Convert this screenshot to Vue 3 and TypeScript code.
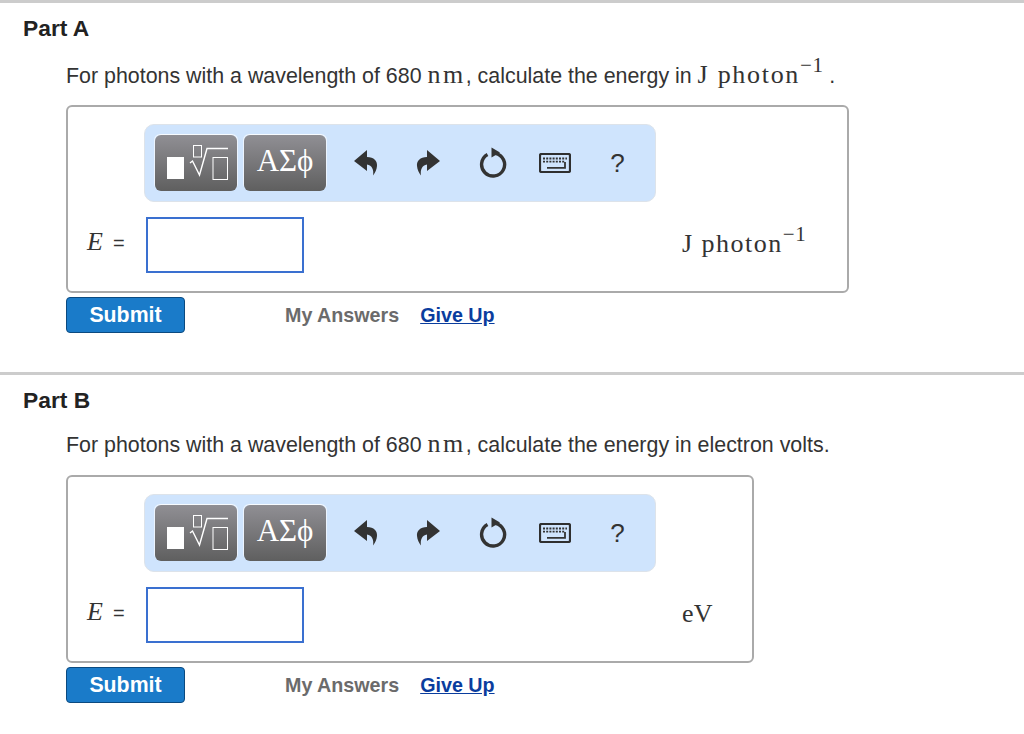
<script setup lang="ts">
interface Part {
  key: string
  title: string
  unit: string
  sup: boolean
}
const parts: Part[] = [
  { key: 'a', title: 'Part A', unit: 'J photon', sup: true },
  { key: 'b', title: 'Part B', unit: 'eV', sup: false },
]
</script>

<template>
  <main class="page">
    <section v-for="p in parts" :key="p.key" class="part" :class="'part-' + p.key">
      <h2 class="title">{{ p.title }}</h2>
      <p class="prompt">
        <span>For photons with a wavelength of 680 </span><span class="math">nm</span><span>, calculate the energy in </span>
        <template v-if="p.sup">
          <span class="math big">J photon<sup>&minus;1</sup></span><span> .</span>
        </template>
        <template v-else><span>electron volts.</span></template>
      </p>
      <div class="box">
        <div class="toolbar">
          <button class="tplbtn" type="button" aria-label="Templates">
            <svg width="82" height="56" viewBox="0 0 82 56">
              <rect x="12" y="22" width="17" height="22" fill="#fff" />
              <rect x="38.5" y="10.5" width="8" height="11.5" fill="none" stroke="#fff" />
              <path d="M35 28L37.5 26L44.5 40L52 13.5H73" fill="none" stroke="#fff" stroke-width="1.4" />
              <rect x="58" y="22.5" width="14.5" height="22" fill="none" stroke="#fff" />
            </svg>
          </button>
          <button class="tplbtn greek" type="button">ΑΣϕ</button>
          <div class="tools">
            <span class="tool">
              <svg width="25" height="26" viewBox="0 0 25 26">
                <path d="M1 11L14 0V7C21 7 24.5 11 24 16C23.7 20 22 23 20 25.5C21 20 19 15 14 14.5V21Z" fill="#333" />
              </svg>
            </span>
            <span class="tool">
              <svg width="25" height="26" viewBox="0 0 25 26">
                <path d="M24 11L11 0V7C4 7 0.5 11 1 16C1.3 20 3 23 5 25.5C4 20 6 15 11 14.5V21Z" fill="#333" />
              </svg>
            </span>
            <span class="tool">
              <svg width="30" height="32" viewBox="0 0 30 32">
                <path d="M18.5 6.3A11.5 11.5 0 1 1 10.5 7.5" fill="none" stroke="#333" stroke-width="3.4" />
                <path d="M14.5 0.5L23 5.5L14.5 10.5Z" fill="#333" />
              </svg>
            </span>
            <span class="tool">
              <svg width="32" height="20" viewBox="0 0 32 20">
                <rect x="1" y="1" width="30" height="18" rx="1.5" fill="none" stroke="#2f2f2f" stroke-width="2.2" />
                <path d="M4 5.5H28M4 8.7H26" stroke="#333" stroke-width="1.8" stroke-dasharray="2 1.2" fill="none" />
                <path d="M8 14.8H26V9" stroke="#333" stroke-width="1.8" fill="none" />
              </svg>
            </span>
            <span class="tool help">?</span>
          </div>
        </div>
        <div class="answer">
          <label class="lhs"><span class="evar">E</span><span class="eq">=</span></label>
          <input class="field" type="text" />
          <span class="unit" :class="{ plain: !p.sup }">{{ p.unit }}<sup v-if="p.sup">&minus;1</sup></span>
        </div>
      </div>
      <div class="actions">
        <button class="submit" type="button">Submit</button>
        <span class="answers">My Answers</span>
        <a class="giveup" href="#">Give Up</a>
      </div>
    </section>
  </main>
</template>

<style scoped>
.page {
  width: 1024px;
  height: 734px;
  overflow: hidden;
  font-family: "Liberation Sans", Arial, sans-serif;
  color: #333;
}
.part {
  border-top: 3px solid #ccc;
  height: 369px;
}
.part-b {
  height: 359px;
}
.title {
  margin: 0;
  padding-left: 23px;
  font-size: 22.8px;
  font-weight: 700;
  line-height: 51px;
  color: #222;
}
.prompt {
  margin: 0 0 8px 66px;
  height: 43px;
  font-size: 21.4px;
  line-height: 41px;
  white-space: pre-wrap;
  color: #333;
}
.part-b .prompt {
  height: 37px;
  line-height: 36px;
  margin-bottom: 12px;
}
.math {
  font-family: "Liberation Serif", serif;
  font-size: 26px;
  letter-spacing: 2.5px;
}
.math.big {
  letter-spacing: 1.7px;
}
.math sup,
.unit sup {
  font-size: 21px;
  line-height: 0;
  vertical-align: 11px;
  letter-spacing: 0.5px;
}
.box {
  box-sizing: border-box;
  width: 783px;
  margin-left: 66px;
  padding: 17px 0 18px;
  border: 2px solid #aaa;
  border-radius: 6px;
}
.part-b .box {
  width: 688px;
}
.toolbar {
  box-sizing: border-box;
  display: flex;
  align-items: center;
  gap: 7px;
  width: 512px;
  height: 78px;
  margin-left: 76px;
  padding-left: 10px;
  background: #cfe4fd;
  border: 1px solid #dde3ea;
  border-radius: 10px;
}
.tplbtn {
  box-sizing: border-box;
  width: 82px;
  height: 56px;
  padding: 0;
  border: 0;
  border-radius: 6px;
  background: linear-gradient(#908f94, #5f5f5f);
  box-shadow: -1px -1px 0 rgba(255, 255, 255, 0.6), 1px -1px 0 rgba(255, 255, 255, 0.6);
  display: flex;
  align-items: center;
  justify-content: center;
}
.greek {
  padding-bottom: 4px;
  font-family: "Liberation Serif", serif;
  font-size: 31px;
  color: #fff;
}
.tools {
  display: flex;
  margin-left: 1px;
}
.tool {
  width: 63px;
  height: 56px;
  display: flex;
  align-items: center;
  justify-content: center;
}
.help {
  font-size: 26px;
  color: #333;
}
.answer {
  display: flex;
  align-items: center;
  height: 56px;
  margin-top: 15px;
}
.lhs {
  box-sizing: border-box;
  display: flex;
  align-items: baseline;
  width: 78px;
  margin-bottom: 6px;
  padding-left: 19px;
  white-space: nowrap;
}
.evar {
  width: 26px;
  font-family: "Liberation Serif", serif;
  font-style: italic;
  font-size: 26px;
}
.eq {
  font-size: 20px;
}
.field {
  box-sizing: border-box;
  width: 158px;
  height: 56px;
  padding: 0;
  border: 2px solid #3a70d0;
  background: #fff;
  outline: none;
}
.unit {
  margin-left: 378px;
  margin-bottom: 2px;
  font-family: "Liberation Serif", serif;
  font-size: 26px;
  letter-spacing: 1.5px;
}
.unit.plain {
  letter-spacing: 0.3px;
}
.actions {
  display: flex;
  align-items: center;
  margin: 4px 0 0 66px;
  font-size: 19.7px;
  font-weight: 700;
}
.submit {
  width: 119px;
  height: 36px;
  padding: 0;
  border: 1.5px solid #0b4a80;
  border-radius: 4px;
  background: #1a7bc9;
  color: #fff;
  font: 700 21.3px "Liberation Sans", Arial, sans-serif;
}
.answers {
  margin-left: 100px;
  color: #6b6b6b;
}
.giveup {
  margin-left: 21px;
  color: #0a3d9e;
  text-decoration: underline;
}
</style>
